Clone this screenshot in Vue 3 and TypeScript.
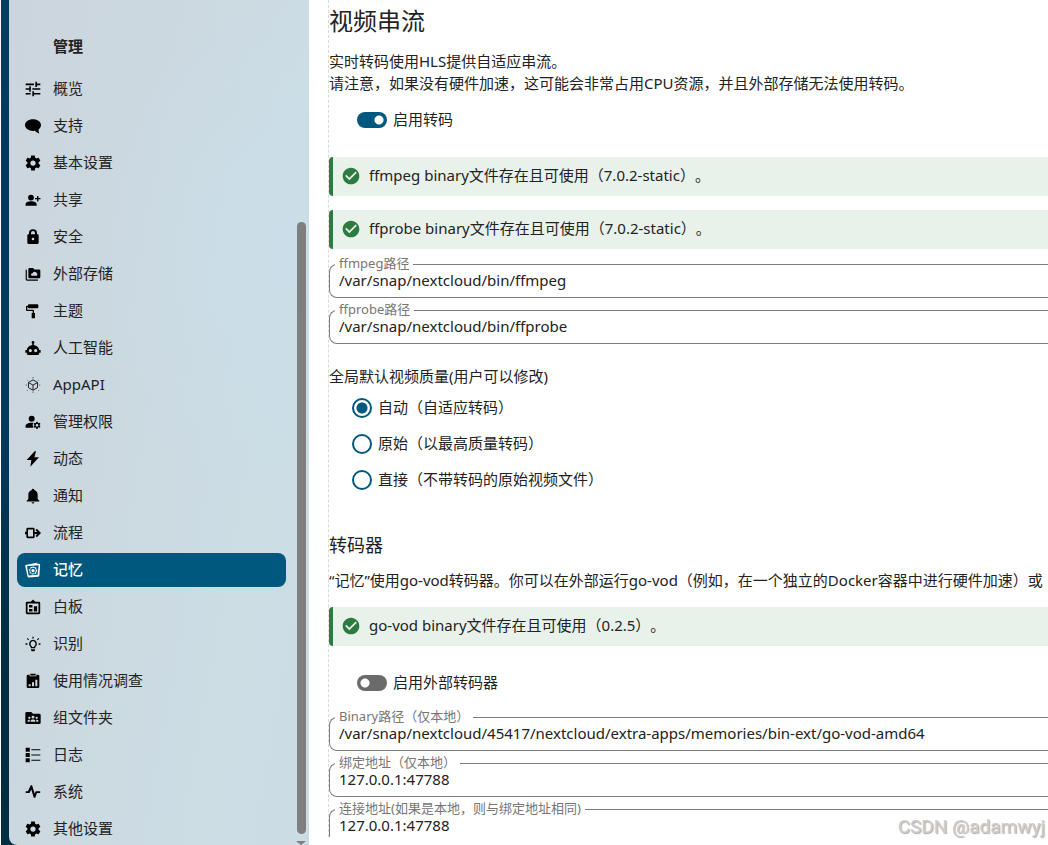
<script setup lang="ts">
import { ref } from 'vue'

interface NavItem {
  label: string
  path: string
  stroke?: boolean
}

const cog =
  'M12,15.5A3.5,3.5 0 0,1 8.5,12A3.5,3.5 0 0,1 12,8.5A3.5,3.5 0 0,1 15.5,12A3.5,3.5 0 0,1 12,15.5M19.43,12.97C19.47,12.65 19.5,12.33 19.5,12C19.5,11.67 19.47,11.34 19.43,11L21.54,9.37C21.73,9.22 21.78,8.95 21.66,8.73L19.66,5.27C19.54,5.05 19.27,4.96 19.05,5.05L16.56,6.05C16.04,5.66 15.5,5.32 14.87,5.07L14.5,2.42C14.46,2.18 14.25,2 14,2H10C9.75,2 9.54,2.18 9.5,2.42L9.13,5.07C8.5,5.32 7.96,5.66 7.44,6.05L4.95,5.05C4.73,4.96 4.46,5.05 4.34,5.27L2.34,8.73C2.21,8.95 2.27,9.22 2.46,9.37L4.57,11C4.53,11.34 4.5,11.67 4.5,12C4.5,12.33 4.53,12.65 4.57,12.97L2.46,14.63C2.27,14.78 2.21,15.05 2.34,15.27L4.34,18.73C4.46,18.95 4.73,19.03 4.95,18.95L7.44,17.94C7.96,18.34 8.5,18.68 9.13,18.93L9.5,21.58C9.54,21.82 9.75,22 10,22H14C14.25,22 14.46,21.82 14.5,21.58L14.87,18.93C15.5,18.67 16.04,18.34 16.56,17.94L19.05,18.95C19.27,19.03 19.54,18.95 19.66,18.73L21.66,15.27C21.78,15.05 21.73,14.78 21.54,14.63L19.43,12.97Z'

const navItems: NavItem[] = [
  { label: '概览', path: 'M1,18V20.4H8.5V18H1M1,3.8V6.2H13.5V3.8H1M13.4,23V20.4H23V18H13.4V15.2H11V23H13.4M6.4,8V10.8H1V13.2H6.4V16H8.8V8H6.4M23,13.2V10.8H11V13.2H23M15.5,9H17.9V6.2H23V3.8H17.9V1H15.5V9Z' },
  { label: '支持', path: 'M12,1.8C18.8,1.8 24,5.6 24,10.6C24,13.4 22.6,15.6 20.3,17.2C20.2,19.4 20.6,21.3 21.4,23.2C18.4,22.5 16.3,21 14.9,19.2C6.5,20.2 0,16 0,10.6C0,5.6 5.2,1.8 12,1.8Z' },
  { label: '基本设置', path: cog },
  { label: '共享', path: 'M9,4A4.4,4.4 0 0,1 13.4,8.4A4.4,4.4 0 0,1 9,12.8A4.4,4.4 0 0,1 4.6,8.4A4.4,4.4 0 0,1 9,4M9,14C13.5,14 17.5,15.8 17.5,18.2V20.5H.8V18.2C.8,15.8 4.5,14 9,14M18.1,6H20.1V9H23.2V11H20.1V14.2H18.1V11H15V9H18.1V6Z' },
  { label: '安全', path: 'M12,17A2,2 0 0,0 14,15C14,13.89 13.1,13 12,13A2,2 0 0,0 10,15A2,2 0 0,0 12,17M18,8A2,2 0 0,1 20.5,10V20.5A2,2 0 0,1 18.5,22.5H5.5A2,2 0 0,1 3.5,20.5V10A2,2 0 0,1 6,8V6A6,5.5 0 0,1 18,6V8M12,3A3,3 0 0,0 9,6V8H15V6A3,3 0 0,0 12,3Z' },
  { label: '外部存储', path: 'M1,5.5H2.8V20.3H19.5V22H3A2,2 0 0,1 1,20V5.5M7,3H12L14.2,5.3H21A2,2 0 0,1 23,7.3V16.5A2,2 0 0,1 21,18.5H7A2,2 0 0,1 5,16.5V5A2,2 0 0,1 7,3M10.5,14.5H17.5A2,2 0 0,0 17.7,11A3.4,3.4 0 0,0 11.4,10.8A1.9,1.9 0 0,0 10.5,14.5Z' },
  { label: '主题', path: 'M6,2H18.5A1.5,1.5 0 0,1 20,3.5V6.5A1.5,1.5 0 0,1 18.5,8H6A1.5,1.5 0 0,1 4.5,6.5V6H3.5V10H12A1.5,1.5 0 0,1 13.5,11.5V15H15V22A1,1 0 0,1 14,23H11A1,1 0 0,1 10,22V15H11.5V12H3A1.5,1.5 0 0,1 1.5,10.5V5.5A1.5,1.5 0 0,1 3,4H4.5V3.5A1.5,1.5 0 0,1 6,2Z' },
  { label: '人工智能', path: 'M12,1.5A2,2 0 0,1 13.2,5.2V7.5C18,8.2 21,11.5 21.2,15H23.5V19H21.2A3,3 0 0,1 18.2,22.5H5.8A3,3 0 0,1 2.8,19H.5V15H2.8C3,11.5 6,8.2 10.8,7.5V5.2A2,2 0 0,1 12,1.5M8,13.5A2.4,2.4 0 0,0 5.6,15.9A2.4,2.4 0 0,0 8,18.3A2.4,2.4 0 0,0 10.4,15.9A2.4,2.4 0 0,0 8,13.5M16,13.5A2.4,2.4 0 0,0 13.6,15.9A2.4,2.4 0 0,0 16,18.3A2.4,2.4 0 0,0 18.4,15.9A2.4,2.4 0 0,0 16,13.5Z' },
  { label: 'AppAPI', stroke: true, path: 'M12,4.3L18.8,8.2V16L12,19.8L5.2,16V8.2ZM5.2,8.2L12,12.2L18.8,8.2M12,12.2V19.8M12,.6V2M12,22V23.4M1.2,12H2.4M21.6,12H22.8M3.4,4.4L4.2,5.2M20.6,4.4L19.8,5.2M3.4,20.4L4.2,19.6M20.6,20.4L19.8,19.6' },
  { label: '管理权限', path: 'M10,2.5A4.5,4.5 0 0,1 14.5,7A4.5,4.5 0 0,1 10,11.5A4.5,4.5 0 0,1 5.5,7A4.5,4.5 0 0,1 10,2.5M9.8,13.2C10.8,13.2 11.6,13.2 12.4,13.4A7,7 0 0,0 12.4,20.8H.8V18.2C.8,15.2 5,13.2 9.8,13.2M17,11.5H19L19.4,13.2L20.6,13.8L22.2,13.2L23.2,15L22,16.2V17.6L23.2,18.8L22.2,20.6L20.6,20L19.4,20.7L19,22.5H17L16.6,20.7L15.4,20L13.8,20.6L12.8,18.8L14,17.6V16.2L12.8,15L13.8,13.2L15.4,13.8L16.6,13.2L17,11.5M18,15A2,2 0 0,0 18,19A2,2 0 0,0 18,15Z' },
  { label: '动态', path: 'M14.5,.5L2.5,13.5H9.5L8,23.5L21,9.5H14.2L16.5,.5Z' },
  { label: '通知', path: 'M12,1A1.9,1.9 0 0,1 13.9,3C17,3.9 19,6.7 19,10V16.5L21.5,19.2V20.3H2.5V19.2L5,16.5V10C5,6.7 7,3.9 10.1,3A1.9,1.9 0 0,1 12,1M9.9,21.2H14.1A2.1,2.1 0 0,1 9.9,21.2Z' },
  { label: '流程', path: 'M4,4.2H12.5A2,2 0 0,1 14.5,6.2V10.5H18.6L15.8,7.7L17.8,5.6L24,12L17.8,18.4L15.8,16.3L18.6,13.5H14.5V17.8A2,2 0 0,1 12.5,19.8H4A2,2 0 0,1 2,17.8V14H0V10H2V6.2A2,2 0 0,1 4,4.2M4.5,6.8V17.2H12V6.8H4.5Z' },
  { label: '记忆', path: 'M1,4.4L17.5,1.3L18,2.8H20.7A2,2 0 0,1 22.7,5L21.5,20.3A2,2 0 0,1 19.4,22.2L5.8,23.3A2,2 0 0,1 3.8,21.8L.4,6.2A1.6,1.6 0 0,1 1,4.4M3,6.3L5.4,20.2L18.9,19.2L20.5,5L3,6.3M12,6.2L14.2,7.9L17,8.1L17.1,10.9L18.7,13L17,15.2L16.6,17.8L13.7,17.8L11.6,19.2L9.6,17.4L6.9,16.9L7.1,14.1L5.7,11.8L7.8,10L8.5,7.3L11,7.7L12,6.2M12,8.7A4.2,4.2 0 0,0 12,17.1A4.2,4.2 0 0,0 12,8.7M12,10.4A2.5,2.5 0 0,1 12,15.4A2.5,2.5 0 0,1 12,10.4Z' },
  { label: '白板', path: 'M12,.6L15.5,4H20.8A2,2 0 0,1 22.8,6V20.8A2,2 0 0,1 20.8,22.8H3.2A2,2 0 0,1 1.2,20.8V6A2,2 0 0,1 3.2,4H8.5L12,.6M3.8,6.6V20.2H20.2V6.6H3.8M6,9H11.2V12.8H6V9M6,15H11.2V18.8H6V15M13.3,11H18.2V18.8H13.3V11Z' },
  { label: '识别', path: 'M12,5.5A6.2,6.2 0 0,1 15.5,16.6V18.5H8.5V16.6A6.2,6.2 0 0,1 12,5.5M12,7.5A4.2,4.2 0 0,0 10.3,15.3V16.6H13.7V15.3A4.2,4.2 0 0,0 12,7.5M9,20H15V21.5L13.8,23H10.2L9,21.5V20M11,1H13V3.6H11V1M.8,11H3.6V13H.8V11M20.4,11H23.2V13H20.4V11M3.9,3L6,5.1L4.8,6.4L2.7,4.3ZM20.1,3L18,5.1L19.2,6.4L21.3,4.3Z' },
  { label: '使用情况调查', path: 'M4.5,2.5H7V5H17V2.5H19.5A2,2 0 0,1 21.5,4.5V20.5A2,2 0 0,1 19.5,22.5H4.5A2,2 0 0,1 2.5,20.5V4.5A2,2 0 0,1 4.5,2.5M8,1H16V3.8H8V1M5.5,17V20H8.5V17H5.5M10.5,14V20H13.5V14H10.5M15.5,10V20H18.5V10H15.5Z' },
  { label: '组文件夹', path: 'M2.5,3H9.5L12,5.5H21.5A2,2 0 0,1 23.5,7.5V19A2,2 0 0,1 21.5,21H2.5A2,2 0 0,1 .5,19V5A2,2 0 0,1 2.5,3M12,8.5A2.2,2.2 0 0,0 12,12.9A2.2,2.2 0 0,0 12,8.5M6.5,10A1.7,1.7 0 0,0 6.5,13.4A1.7,1.7 0 0,0 6.5,10M17.5,10A1.7,1.7 0 0,0 17.5,13.4A1.7,1.7 0 0,0 17.5,10M4,17.5H7.2V14.8C5.4,14.6 4,15.3 4,16.3V17.5M8.5,17.5H15.5V16.2C15.5,13.4 8.5,13.4 8.5,16.2V17.5M16.8,17.5H20V16.3C20,15.3 18.6,14.6 16.8,14.8V17.5Z' },
  { label: '日志', path: 'M1,1H7.2V7H1V1M1,9H7.2V15H1V9M1,17H7.2V23H1V17M9.5,3.2H23V4.8H9.5V3.2M9.5,11.2H23V12.8H9.5V11.2M9.5,19.2H23V20.8H9.5V19.2Z' },
  { label: '系统', path: 'M1,10.8H4.4L8.6,1.8H10.6L14.5,14.5L16,10.8H22.8V13.6H18L15.4,20.8H13.2L9.4,8.3L6.8,13.6H1V10.8Z' },
  { label: '其他设置', path: cog },
]

const activeItem = ref('记忆')
const transcoding = ref(true)
const external = ref(false)
const quality = ref('auto')
const qualities = [
  { value: 'auto', label: '自动（自适应转码）' },
  { value: 'original', label: '原始（以最高质量转码）' },
  { value: 'direct', label: '直接（不带转码的原始视频文件）' },
]
const binaryNotes = ['ffmpeg binary文件存在且可使用（7.0.2-static）。', 'ffprobe binary文件存在且可使用（7.0.2-static）。']
const binaryFields = ref([
  { id: 'ffmpeg', label: 'ffmpeg路径', value: '/var/snap/nextcloud/bin/ffmpeg' },
  { id: 'ffprobe', label: 'ffprobe路径', value: '/var/snap/nextcloud/bin/ffprobe' },
])
const transcoderNotes = ['go-vod binary文件存在且可使用（0.2.5）。']
const transcoderFields = ref([
  { id: 'vod-path', label: 'Binary路径（仅本地）', value: '/var/snap/nextcloud/45417/nextcloud/extra-apps/memories/bin-ext/go-vod-amd64' },
  { id: 'vod-bind', label: '绑定地址（仅本地）', value: '127.0.0.1:47788' },
  { id: 'vod-connect', label: '连接地址(如果是本地，则与绑定地址相同)', value: '127.0.0.1:47788' },
])
</script>

<template>
  <div class="page">
    <aside class="sidebar">
      <nav class="nav" aria-label="管理">
        <h2 class="nav-title">管理</h2>
        <ul class="nav-list">
          <li v-for="item in navItems" :key="item.label">
            <a href="#" class="nav-link" :class="{ active: item.label === activeItem }" @click.prevent="activeItem = item.label">
              <svg class="nav-icon" :class="{ outline: item.stroke, cog: item.path === cog }" viewBox="0 0 24 24" aria-hidden="true">
                <path :d="item.path" fill-rule="evenodd" />
              </svg>
              <span>{{ item.label }}</span>
            </a>
          </li>
        </ul>
      </nav>
      <div class="scroll-thumb"></div>
      <div class="scroll-arrow"></div>
    </aside>

    <main class="content">
      <h1 class="title">视频串流</h1>
      <p class="text intro">实时转码使用HLS提供自适应串流。<br />请注意，如果没有硬件加速，这可能会非常占用CPU资源，并且外部存储无法使用转码。</p>

      <label class="switch">
        <input v-model="transcoding" type="checkbox" />
        <span>启用转码</span>
      </label>

      <div class="notes">
        <div v-for="note in binaryNotes" :key="note" class="note">
          <svg viewBox="0 0 24 24" aria-hidden="true"><path d="M12 2C6.5 2 2 6.5 2 12S6.5 22 12 22 22 17.5 22 12 17.5 2 12 2M10 17L5 12L6.41 10.59L10 14.17L17.59 6.58L19 8L10 17Z" /></svg>
          <span>{{ note }}</span>
        </div>
      </div>

      <div class="fields">
        <div v-for="field in binaryFields" :key="field.id" class="field">
          <input :id="field.id" v-model="field.value" type="text" />
          <label :for="field.id">{{ field.label }}</label>
        </div>
      </div>

      <p class="text quality-title">全局默认视频质量(用户可以修改)</p>
      <div class="radios">
        <label v-for="option in qualities" :key="option.value" class="radio">
          <input v-model="quality" type="radio" name="quality" :value="option.value" />
          <span>{{ option.label }}</span>
        </label>
      </div>

      <h2 class="subtitle">转码器</h2>
      <p class="text">“记忆”使用go-vod转码器。你可以在外部运行go-vod（例如，在一个独立的Docker容器中进行硬件加速）或</p>

      <div class="notes transcoder-notes">
        <div v-for="note in transcoderNotes" :key="note" class="note">
          <svg viewBox="0 0 24 24" aria-hidden="true"><path d="M12 2C6.5 2 2 6.5 2 12S6.5 22 12 22 22 17.5 22 12 17.5 2 12 2M10 17L5 12L6.41 10.59L10 14.17L17.59 6.58L19 8L10 17Z" /></svg>
          <span>{{ note }}</span>
        </div>
      </div>

      <label class="switch">
        <input v-model="external" type="checkbox" />
        <span>启用外部转码器</span>
      </label>

      <div class="fields transcoder-fields">
        <div v-for="field in transcoderFields" :key="field.id" class="field">
          <input :id="field.id" v-model="field.value" type="text" />
          <label :for="field.id">{{ field.label }}</label>
        </div>
      </div>
    </main>
    <div class="watermark">CSDN @adamwyj</div>
  </div>
</template>

<style>
body {
  margin: 0;
  background: #fff;
}
</style>

<style scoped>
* {
  box-sizing: border-box;
}

.page {
  position: relative;
  display: flex;
  height: 100vh;
  overflow: hidden;
  padding-left: 1px;
  color: #222;
  font: 15px/22px "Noto Sans", "Noto Sans CJK SC", sans-serif;
  text-spacing-trim: space-all;
}

.sidebar {
  position: relative;
  flex: 0 0 308px;
  padding-left: 8px;
  background: linear-gradient(180deg, #003b60 0%, #003a5d 50%, #002c44 78%, #002d42 100%);
}

.nav {
  height: 100%;
  padding: 35px 23px 0 8px;
  border-bottom-left-radius: 8px;
  background:
    radial-gradient(ellipse 220px 260px at 100% 30%, #cadee9 0%, rgba(202, 222, 233, 0) 100%),
    linear-gradient(100deg, #cbd5de 0%, #ccd8e0 35%, #ccdde4 75%, #cbdce4 100%);
}

.nav-title {
  margin: 0 0 15px 36px;
  font-size: 15px;
  font-weight: 600;
  line-height: 22px;
}

.nav-list {
  display: flex;
  flex-direction: column;
  gap: 3px;
  margin: 0;
  padding: 0;
  list-style: none;
}

.nav-link {
  display: flex;
  align-items: center;
  gap: 12px;
  height: 34px;
  padding: 0 8px;
  border-radius: 8px;
  color: #222;
  text-decoration: none;
}

.nav-link span,
.switch span,
.radio span {
  padding-bottom: 2px;
}

.nav-link.active {
  background: #00587f;
  color: #fff;
  font-weight: 500;
}

.nav-icon {
  width: 16px;
  height: 16px;
  fill: #000;
}

.nav-icon.cog {
  width: 18px;
  height: 18px;
  margin: 0 -1px;
}

.active .nav-icon {
  fill: #fff;
}

.nav-icon.outline {
  fill: none;
  stroke: #222;
  stroke-width: 1.5;
}

.scroll-thumb {
  position: absolute;
  top: 222px;
  right: 3px;
  bottom: 11px;
  width: 9px;
  border-radius: 5px;
  background: #7f7f7f;
}

.scroll-arrow {
  position: absolute;
  right: 3px;
  bottom: 0;
  border: 5px solid transparent;
  border-top: 4px solid #7f7f7f;
  border-bottom: 0;
}

.content {
  flex: 1;
  min-width: 0;
  height: calc(100vh - 8px);
  margin-left: 19px;
  padding-top: 3px;
  border-left: 1px dashed #d3dfd5;
  overflow: hidden;
  white-space: nowrap;
}

.title {
  margin: 0;
  font-size: 24px;
  font-weight: 400;
  line-height: 36px;
}

.text {
  margin: 0;
}

.intro {
  margin: 11px 0 14px;
}

.switch {
  display: flex;
  align-items: center;
  gap: 6px;
  height: 24px;
  margin-left: 28px;
}

.switch input {
  width: 30px;
  height: 16px;
  margin: 0;
  border-radius: 8px;
  appearance: none;
  background: radial-gradient(circle at 8px 8px, #fff 4px, #6b6b6b 5px);
}

.switch input:checked {
  background: radial-gradient(circle at 22px 8px, #fff 4px, #00587f 5px);
}

.notes {
  display: flex;
  flex-direction: column;
  gap: 14px;
  margin-top: 25px;
}

.note {
  display: flex;
  align-items: center;
  gap: 8px;
  height: 39px;
  padding-left: 8px;
  border-left: 4px solid #2d7b41;
  border-radius: 4px 0 0 4px;
  background: #e8f2ea;
}

.note span {
  padding-bottom: 4px;
}

.note svg {
  width: 20px;
  height: 20px;
  margin-bottom: 2px;
  fill: #2d7b41;
}

.fields {
  display: flex;
  flex-direction: column;
  gap: 12px;
  margin-top: 15px;
}

.field {
  position: relative;
  height: 34px;
}

.field input {
  width: 100%;
  height: 34px;
  padding: 0 9px 2px;
  border: 1px solid #7d7d7d;
  border-right: 0;
  border-radius: 8px 0 0 8px;
  outline: 0;
  background: #fff;
  color: #222;
  font: inherit;
}

.field label {
  position: absolute;
  top: -9px;
  left: 6px;
  padding: 0 4px;
  background: #fff;
  color: #767676;
  font-size: 13px;
  line-height: 16px;
}

.quality-title {
  margin-top: 21px;
}

.radios {
  margin: 3px 0 33px 23px;
}

.radio {
  display: flex;
  align-items: center;
  gap: 6px;
  height: 36px;
}

.radio input {
  width: 20px;
  height: 20px;
  margin: 0;
  border: 2px solid #00587f;
  border-radius: 50%;
  appearance: none;
}

.radio input:checked {
  background: radial-gradient(circle, #00587f 5px, #fff 6px);
}

.subtitle {
  margin: 0 0 10px;
  font-size: 18px;
  font-weight: 400;
  line-height: 28px;
}

.transcoder-notes {
  margin: 16px 0 25px;
}

.transcoder-fields {
  margin-top: 22px;
}

.watermark {
  position: absolute;
  right: 3px;
  bottom: 6px;
  color: #cdcdcd;
  font: 19px/24px Roboto, sans-serif;
  text-shadow: 1px 1px 1px #a8a8a8;
}
</style>
